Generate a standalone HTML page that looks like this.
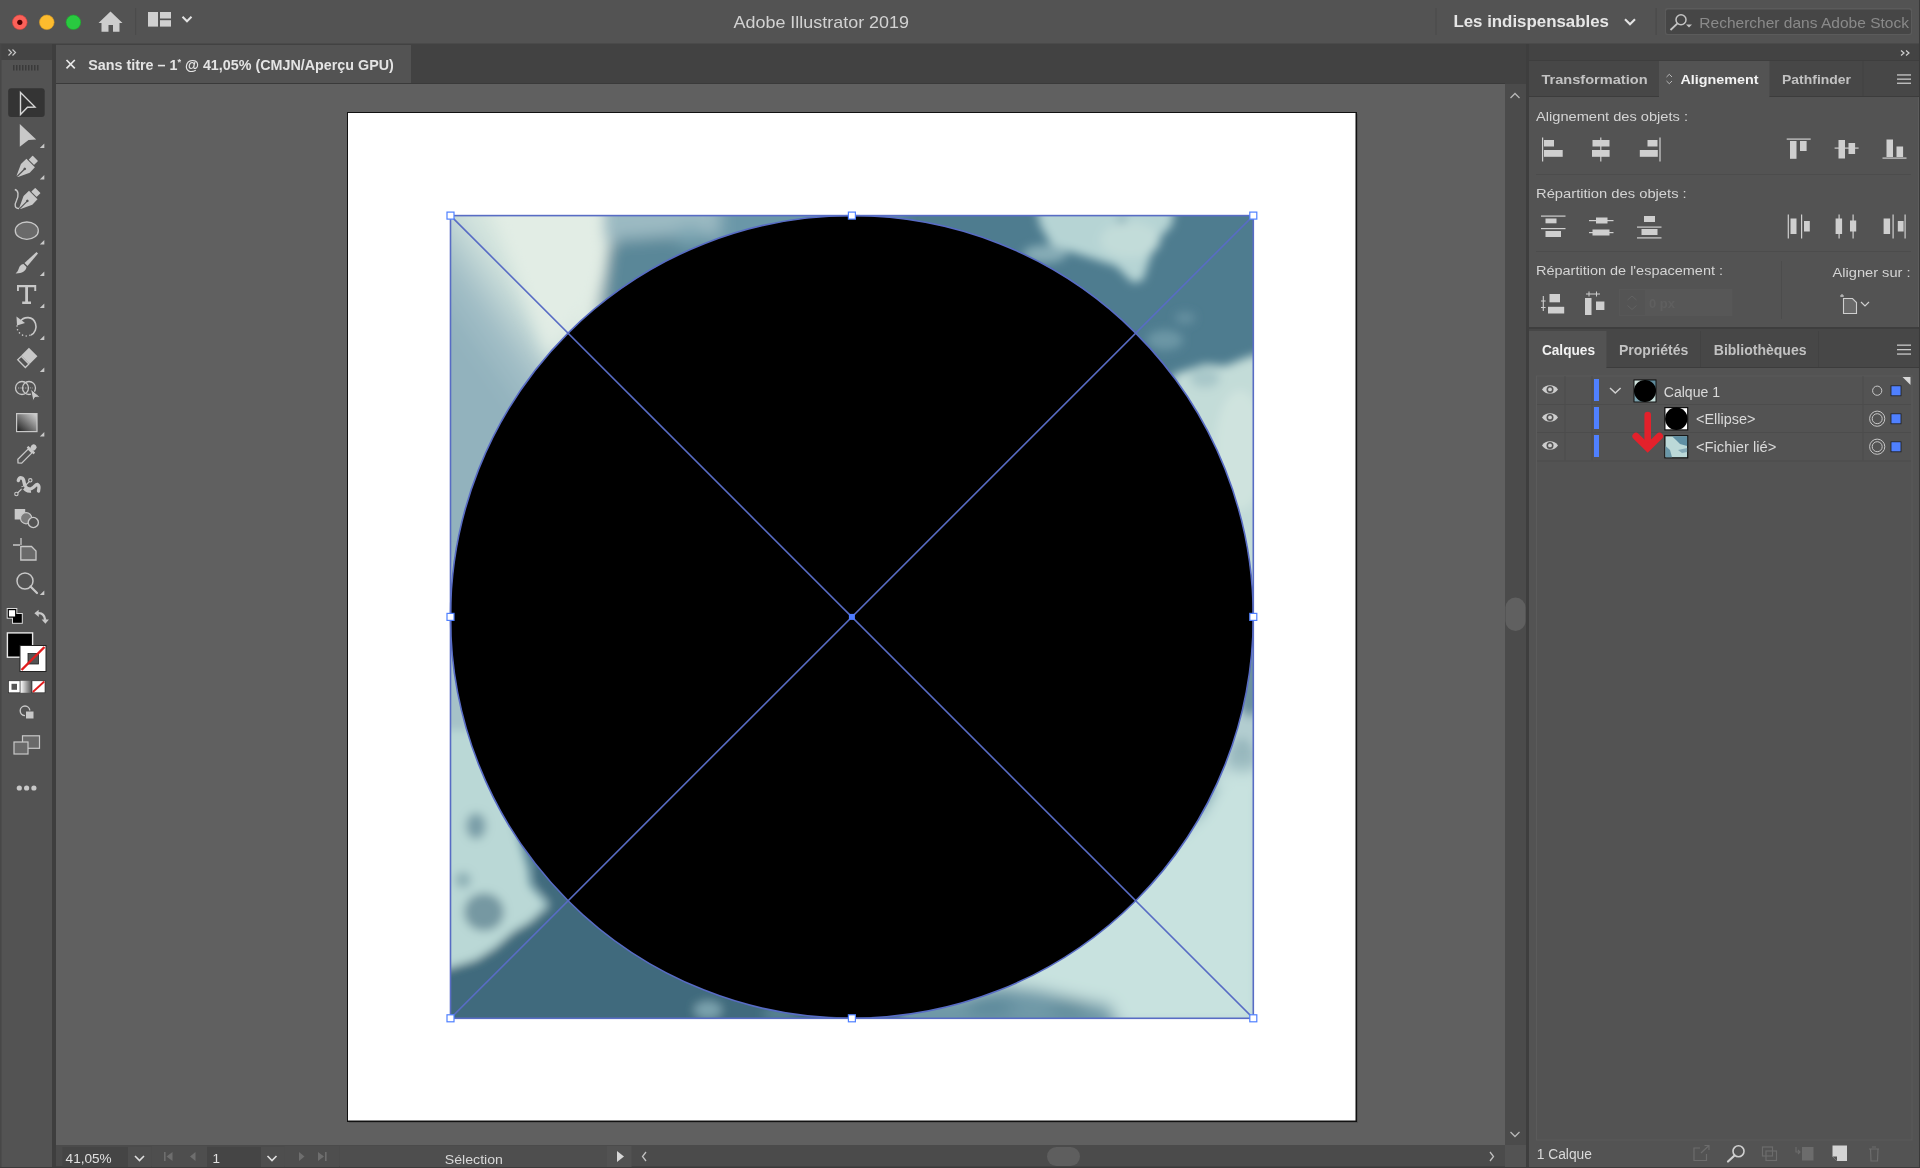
<!DOCTYPE html>
<html><head><meta charset="utf-8">
<style>
*{margin:0;padding:0;box-sizing:border-box}
html,body{width:1920px;height:1168px;overflow:hidden;background:#535353}
svg{position:absolute;left:0;top:0;display:block;will-change:transform}
text{font-family:"Liberation Sans",sans-serif;white-space:pre}
</style></head><body>
<svg width="1920" height="1168" viewBox="0 0 1920 1168">
<defs>
  <linearGradient id="tlgrad" gradientUnits="userSpaceOnUse" x1="452" y1="330" x2="548" y2="262"><stop offset="0" stop-color="#92b2bd"/><stop offset="0.3" stop-color="#a2bec6"/><stop offset="0.65" stop-color="#cfe1dc"/><stop offset="1" stop-color="#e1ece4"/></linearGradient>
  <filter id="bl4" x="-20%" y="-20%" width="140%" height="140%"><feGaussianBlur stdDeviation="4"/></filter>
  <filter id="bl5" x="-20%" y="-20%" width="140%" height="140%"><feGaussianBlur stdDeviation="5"/></filter>
  <filter id="bl6" x="-20%" y="-20%" width="140%" height="140%"><feGaussianBlur stdDeviation="8"/></filter>
  <clipPath id="circ"><circle cx="851.9" cy="616.9" r="401.4"/></clipPath>
  <clipPath id="imgclip"><rect x="450.5" y="215.6" width="802.8" height="802.7"/></clipPath>
</defs>

<!-- ===== TITLE BAR ===== -->
<rect x="0" y="0" width="1920" height="44" fill="#535353"/>
<rect x="0" y="43" width="1920" height="1" fill="#4a4a4a"/>
<!-- traffic lights -->
<circle cx="19.8" cy="22.3" r="7.3" fill="#fc6159" stroke="#e0443e" stroke-width="0.6"/>
<circle cx="19.8" cy="22.3" r="2.6" fill="#4d0000"/>
<circle cx="46.8" cy="22.3" r="7.3" fill="#fdbc2e" stroke="#de9f25" stroke-width="0.6"/>
<circle cx="73.4" cy="22.3" r="7.3" fill="#29c940" stroke="#1aab29" stroke-width="0.6"/>
<!-- home -->
<path d="M110.5 11.5 L122.5 23 L119.5 23 L119.5 31.8 L113 31.8 L113 25 L108.5 25 L108.5 31.8 L101.5 31.8 L101.5 23 L98.5 23 Z" fill="#cdcdcd"/>
<rect x="135" y="8" width="1.2" height="27" fill="#4b4b4b"/>
<!-- layout icon -->
<rect x="148" y="12" width="10" height="14.6" fill="#d0d0d0"/>
<rect x="160" y="12" width="11" height="6.5" fill="#d0d0d0"/>
<rect x="160" y="20.2" width="11" height="6.4" fill="#d0d0d0"/>
<path d="M182.5 16.8 L187 21.3 L191.5 16.8" stroke="#e4e4e4" stroke-width="2" fill="none"/>
<!-- title -->
<text x="733.5" y="28.1" font-size="17" fill="#d2d2d2" textLength="175.5" lengthAdjust="spacingAndGlyphs">Adobe Illustrator 2019</text>
<!-- workspace -->
<rect x="1435.4" y="8" width="1.2" height="27" fill="#4b4b4b"/>
<text x="1453.4" y="26.7" font-size="16.5" font-weight="bold" fill="#e6e6e6" textLength="155.6" lengthAdjust="spacingAndGlyphs">Les indispensables</text>
<path d="M1625 19.3 L1630 24.3 L1635 19.3" stroke="#e4e4e4" stroke-width="2.1" fill="none"/>
<rect x="1655.5" y="8" width="1.2" height="27" fill="#4b4b4b"/>
<!-- search -->
<rect x="1665" y="8" width="247" height="27" rx="2" fill="#5b5b5b"/>
<rect x="1666" y="9.5" width="245" height="24.5" rx="2" fill="#464646"/>
<circle cx="1681" cy="19.8" r="5" stroke="#c4c4c4" stroke-width="1.5" fill="none"/>
<path d="M1677.5 23.3 L1670.5 30" stroke="#c4c4c4" stroke-width="1.8"/>
<path d="M1686 24.5 L1692 24.5 L1689 27.5 Z" fill="#c4c4c4"/>
<text x="1699.3" y="27.7" font-size="14.5" fill="#8a8a8a" textLength="209.7" lengthAdjust="spacingAndGlyphs">Rechercher dans Adobe Stock</text>

<!-- ===== TAB STRIP ===== -->
<rect x="0" y="44" width="1920" height="40" fill="#424242"/>

<!-- ===== LEFT TOOLBAR ===== -->
<rect x="0" y="44" width="52" height="1124" fill="#535353"/>
<rect x="0" y="44" width="52" height="16" fill="#444444"/>
<rect x="52" y="44" width="4" height="1124" fill="#3e3e3e"/>
<rect x="0" y="44" width="1.5" height="1124" fill="#474747"/>
<path d="M8.5 49.5 L11.5 52.5 L8.5 55.5 M12.5 49.5 L15.5 52.5 L12.5 55.5" stroke="#c8c8c8" stroke-width="1.2" fill="none"/>
<g fill="#3a3a3a"><rect x="13" y="65" width="1.5" height="5.5"/><rect x="16" y="65" width="1.5" height="5.5"/><rect x="19" y="65" width="1.5" height="5.5"/><rect x="22" y="65" width="1.5" height="5.5"/><rect x="25" y="65" width="1.5" height="5.5"/><rect x="28" y="65" width="1.5" height="5.5"/><rect x="31" y="65" width="1.5" height="5.5"/><rect x="34" y="65" width="1.5" height="5.5"/><rect x="37" y="65" width="1.5" height="5.5"/></g>
<!-- selected tool bg -->
<rect x="8.2" y="88.2" width="36.5" height="28.8" rx="3" fill="#343434"/>
<g fill="#c8c8c8" stroke="none">
<!-- 1 selection outline -->
<path d="M20.5 92.5 L35 107 L27.5 107.3 L20.5 114.5 Z" fill="none" stroke="#d8d8d8" stroke-width="1.4" stroke-linejoin="miter"/>
<!-- 2 direct selection -->
<path d="M19.8 124 L36.2 139.5 L28.5 140 L19.8 146.7 Z"/>
<path d="M44.3 143.5 L44.3 148.0 L39.8 148.0 Z" fill="#c8c8c8"/>
<!-- 3 pen -->
<g transform="translate(26.4 167.2) rotate(45)">
  <rect x="-3.8" y="-12.6" width="7.6" height="5.6" rx="0.6"/>
  <path d="M-6 -6 L6 -6 L6.2 1.5 L1 12.8 L-1 12.8 L-6.2 1.5 Z"/>
  <path d="M0 2.5 L0 12.8" stroke="#535353" stroke-width="1.2"/>
  <circle cx="0" cy="2.3" r="1.3" fill="#535353"/>
</g>
<path d="M44.3 175 L44.3 179.5 L39.8 179.5 Z" fill="#c8c8c8"/>
<!-- 4 curvature -->
<g transform="translate(29 199.3) rotate(45)">
  <rect x="-3.8" y="-12.6" width="7.6" height="5.6" rx="0.6"/>
  <path d="M-6 -6 L6 -6 L6.2 1.5 L1 12.8 L-1 12.8 L-6.2 1.5 Z"/>
  <path d="M0 2.5 L0 12.8" stroke="#535353" stroke-width="1.2"/>
  <circle cx="0" cy="2.3" r="1.3" fill="#535353"/>
</g>
<path d="M14.8 189.5 C18.5 190.5 19 195 16.5 200.5 C14 205.5 15 208.5 19 208.5" stroke="#c8c8c8" stroke-width="1.4" fill="none"/>
<!-- 5 ellipse -->
<ellipse cx="26.8" cy="230.7" rx="11.5" ry="8.7" fill="#6a6a6a" stroke="#c8c8c8" stroke-width="1.3"/>
<path d="M44.3 240 L44.3 244.5 L39.8 244.5 Z" fill="#c8c8c8"/>
<!-- 6 paintbrush -->
<path d="M36.5 252 L38 253.5 L27.5 266 L24.5 263 Z"/>
<path d="M23.5 264 L26.5 267 C26 271 22 273.5 15.6 273.4 C18.5 271.5 18.5 268 20 266 C21 264.8 22.3 264 23.5 264 Z"/>
<path d="M44.3 271.5 L44.3 276.0 L39.8 276.0 Z" fill="#c8c8c8"/>
<!-- 7 type -->
<path d="M17 285 L36.2 285 L36.2 291 L34.3 291 L34.3 287.3 L28 287.3 L28 301.6 L31 301.6 L31 304 L22.2 304 L22.2 301.6 L25.2 301.6 L25.2 287.3 L18.9 287.3 L18.9 291 L17 291 Z"/>
<path d="M44.3 303.5 L44.3 308.0 L39.8 308.0 Z" fill="#c8c8c8"/>
<!-- 8 rotate -->
<path d="M20 321.5 C24 316 33 316 35.5 323.5 C37 328 35 333 31 335" stroke="#c8c8c8" stroke-width="1.6" fill="none"/>
<path d="M16.5 316.5 L17 325.5 L25 323 Z"/>
<g><circle cx="29.9423986675284" cy="335.3543713166886" r="0.8"/><circle cx="26.222604538137755" cy="335.9959492288943" r="0.8"/><circle cx="22.546605052802146" cy="335.13832555484396" r="0.8"/><circle cx="19.494759702358166" cy="332.91690021523596" r="0.8"/><circle cx="17.54888776364775" cy="329.6823874264811" r="0.8"/><circle cx="17.016199629949845" cy="325.945445637438" r="0.8"/></g>
<path d="M44.3 335.5 L44.3 340.0 L39.8 340.0 Z" fill="#c8c8c8"/>
<!-- 9 eraser -->
<g transform="translate(27.2 358) rotate(-45)">
  <rect x="-2.5" y="-6" width="11" height="12" />
  <rect x="-8" y="-5.4" width="5" height="10.8" fill="none" stroke="#c8c8c8" stroke-width="1.3"/>
</g>
<path d="M44.3 367.5 L44.3 372.0 L39.8 372.0 Z" fill="#c8c8c8"/>
<!-- 10 shape builder -->
<circle cx="22" cy="388" r="6.5" fill="none" stroke="#c8c8c8" stroke-width="1.3"/>
<circle cx="29" cy="388" r="6.5" fill="none" stroke="#c8c8c8" stroke-width="1.3"/>
<path d="M18 388 L33 388" stroke="#c8c8c8" stroke-width="0.8" stroke-dasharray="1.2 1.2"/>
<path d="M30.5 389 L40.3 397 L35 397.5 L33 401.3 Z" stroke="#535353" stroke-width="1"/>
<!-- 11 gradient -->
<defs><linearGradient id="gtool" x1="0" y1="1" x2="1" y2="0"><stop offset="0" stop-color="#1a1a1a"/><stop offset="1" stop-color="#d8d8d8"/></linearGradient></defs>
<rect x="16.6" y="413.6" width="20.4" height="18" fill="url(#gtool)" stroke="#c8c8c8" stroke-width="1.2"/>
<path d="M44.3 432 L44.3 436.5 L39.8 436.5 Z" fill="#c8c8c8"/>
<!-- 12 eyedropper -->
<g transform="translate(26.5 454.5) rotate(45)">
  <rect x="-2.8" y="-13" width="5.6" height="6" rx="2.5"/>
  <rect x="-4.8" y="-7.5" width="9.6" height="2.5" rx="0.5"/>
  <path d="M-2.7 -5 L2.7 -5 L2.7 9.5 L0 12 L-2.7 9.5 Z" fill="none" stroke="#c8c8c8" stroke-width="1.3"/>
</g>
<!-- 13 blend -->
<path d="M18.3 480.5 C19.5 476.5 23.5 477 24 482 C24.5 487.5 27.5 490 31.5 488.5 C35 487 35.5 484 37.5 484.5 C39.5 485.5 39 489 38.5 491" stroke="#c8c8c8" stroke-width="3.4" fill="none" stroke-linecap="round"/>
<path d="M22.5 486 C23.5 489.5 27 492 31 491.5" stroke="#c8c8c8" stroke-width="2.5" fill="none"/>
<path d="M17 493.5 L30.5 480.5" stroke="#c8c8c8" stroke-width="1.1"/>
<ellipse cx="22.8" cy="488" rx="1.8" ry="1.2" fill="#535353" transform="rotate(-40 22.8 488)"/>
<circle cx="16.4" cy="494" r="1.7" fill="#535353" stroke="#c8c8c8" stroke-width="1.1"/>
<circle cx="30.3" cy="480.3" r="1.7" fill="#535353" stroke="#c8c8c8" stroke-width="1.1"/>
<!-- 14 symbol sprayer -->
<rect x="14.7" y="509" width="10.5" height="10.5"/>
<circle cx="26.1" cy="518.2" r="5.6" fill="#7a7a7a" stroke="#c8c8c8" stroke-width="1.2"/>
<circle cx="33.3" cy="522.5" r="5.1" fill="#535353" stroke="#c8c8c8" stroke-width="1.4"/>
<!-- 15 artboard -->
<path d="M21 538 L21 545 M13 545 L20 545" stroke="#c8c8c8" stroke-width="1.3"/>
<path d="M20.8 546.5 L31.5 546.5 L36 551 L36 560 L20.8 560 Z" fill="#6a6a6a" stroke="#c8c8c8" stroke-width="1.3"/>
<!-- 16 zoom -->
<circle cx="25" cy="581" r="8" fill="none" stroke="#c8c8c8" stroke-width="1.5"/>
<path d="M30.5 586.5 L37 593" stroke="#c8c8c8" stroke-width="2.2" stroke-linecap="round"/>
<path d="M44.3 590.5 L44.3 595.0 L39.8 595.0 Z" fill="#c8c8c8"/>
<!-- 17 default fill stroke & swap -->
<rect x="6.7" y="608" width="10.6" height="10.7" fill="#d8d8d8"/>
<rect x="12" y="613" width="10.8" height="10.8" fill="#d8d8d8"/>
<rect x="13" y="614" width="8.8" height="8.8" fill="#000"/>
<rect x="7.7" y="609" width="8.6" height="8.7" fill="#000"/>
<rect x="8.9" y="610.2" width="6.2" height="6.3" fill="#fff"/>
<path d="M37.5 613.3 C41.5 612.8 44.5 614.8 45.2 620" stroke="#c8c8c8" stroke-width="2.3" fill="none"/>
<path d="M34.4 613.2 L38.6 609.8 L38.8 617 Z" fill="#c8c8c8"/>
<path d="M41.6 619.6 L48.9 619.6 L45.4 623.8 Z" fill="#c8c8c8"/>
<!-- 18 fill stroke big -->
<rect x="7.4" y="632.9" width="25.2" height="24.3" fill="#000" stroke="#e8e8e8" stroke-width="1.4"/>
<rect x="20" y="645.5" width="26" height="26" fill="#fff" stroke="#222" stroke-width="1"/>
<rect x="28" y="653.5" width="10.5" height="10.5" fill="#535353" stroke="#222" stroke-width="0.8"/>
<path d="M21.5 670 L44.5 647" stroke="#e11d1d" stroke-width="2.4"/>
<!-- 19 mode buttons -->
<rect x="8.5" y="680.8" width="11.5" height="12" fill="#fff" stroke="#222" stroke-width="0.6"/>
<rect x="11.5" y="683.8" width="5.5" height="6" fill="#555"/>
<defs><linearGradient id="gmode" x1="0" x2="1"><stop offset="0" stop-color="#fff"/><stop offset="1" stop-color="#555"/></linearGradient></defs>
<rect x="20.5" y="680.8" width="11" height="12" fill="url(#gmode)"/>
<rect x="32" y="680.8" width="13" height="12" fill="#fff" stroke="#222" stroke-width="0.6"/>
<path d="M32.8 692 L44.3 681.5" stroke="#e11d1d" stroke-width="1.8"/>
<!-- 20 draw mode -->
<circle cx="25" cy="710.8" r="4.8" fill="none" stroke="#c8c8c8" stroke-width="1.4"/>
<rect x="25.5" y="711" width="8.5" height="8" stroke="#535353" stroke-width="1"/>
<!-- 21 screen mode -->
<rect x="22.5" y="735.8" width="17" height="12.5" fill="#6a6a6a" stroke="#c8c8c8" stroke-width="1.2"/>
<rect x="14" y="742" width="14" height="12" fill="#6a6a6a" stroke="#c8c8c8" stroke-width="1.2"/>
<!-- 22 dots -->
<circle cx="19.3" cy="788" r="2.6"/><circle cx="26.6" cy="788" r="2.6"/><circle cx="33.9" cy="788" r="2.6"/>
</g>

<!-- ===== CANVAS ===== -->
<rect x="56" y="84" width="1449" height="1061" fill="#606060"/>
<!-- active doc tab -->
<rect x="56" y="45" width="355" height="38" fill="#535353"/>
<rect x="56" y="83" width="1449" height="1" fill="#3a3a3a"/>
<path d="M66.5 60 L74.8 68.3 M74.8 60 L66.5 68.3" stroke="#e8e8e8" stroke-width="1.7"/>
<text x="88.3" y="69.5" font-size="14" font-weight="bold" fill="#e4e4e4" textLength="305.5" lengthAdjust="spacingAndGlyphs">Sans titre – 1<tspan font-size="9" dy="-5">*</tspan><tspan dy="5"> @ 41,05% (CMJN/Aperçu GPU)</tspan></text>

<!-- artboard -->
<rect x="347" y="112" width="1010" height="1010" fill="#111"/>
<rect x="349" y="1122" width="1009" height="1" fill="#535353"/>
<rect x="1357" y="114" width="1" height="1009" fill="#535353"/>
<rect x="348" y="113" width="1007.5" height="1007.5" fill="#ffffff"/>

<!-- image -->
<g clip-path="url(#imgclip)">
  <rect x="450" y="215" width="804" height="804" fill="#4e7c8f"/>
  <g filter="url(#bl6)">
    <!-- TL left column -->
    <path d="M430 200 L620 200 L600 330 L560 460 L500 720 L430 720 Z" fill="url(#tlgrad)"/>
    <!-- TL dark top -->
    <path d="M640 200 L900 200 L900 320 L640 320 Z" fill="#6b97a8"/>
    <path d="M600 200 L720 200 L720 236 L600 240 Z" fill="#9bbac2"/>
    <path d="M608 246 C625 236 660 238 705 232 L720 300 L596 330 Z" fill="#5a8798"/>
    <ellipse cx="690" cy="236" rx="14" ry="10" fill="#7ba5b2"/>
  </g>
  <g filter="url(#bl6)">
    <path d="M490 200 L600 200 L598 270 L572 325 L548 360 Z" fill="#e2ede5"/>
  </g>
<g filter="url(#bl5)">
    <!-- TR cloud 1 -->
    <path d="M1036 205 L1175 205 L1172 225 L1158 240 L1150 258 L1143 280 L1133 283 L1116 266 L1085 256 L1052 246 L1040 225 Z" fill="#b6d4d4"/>
    <ellipse cx="1122" cy="222" rx="5" ry="7" fill="#86acb6"/>
    <ellipse cx="1045" cy="254" rx="22" ry="9" fill="#86acb6"/>
    <ellipse cx="1130" cy="240" rx="30" ry="18" fill="#c2dcd9"/>
    <ellipse cx="1165" cy="340" rx="18" ry="10" fill="#6c96a5"/>
    <ellipse cx="1185" cy="318" rx="10" ry="6" fill="#6690a0"/>
    <!-- TR cloud 2 -->
    <path d="M1172 375 L1205 364 L1225 366 L1245 358 L1265 352 L1265 610 L1220 610 L1200 520 L1180 420 Z" fill="#c3dcd8"/>
    <ellipse cx="1205" cy="378" rx="15" ry="10" fill="#a8c7c9"/>
    <ellipse cx="1240" cy="450" rx="25" ry="60" fill="#cfe3de"/>
    <!-- right middle -->
    <path d="M1215 600 L1265 600 L1265 790 L1215 790 Z" fill="#b2cdd0"/>
    <ellipse cx="1250" cy="685" rx="14" ry="32" fill="#6c91a0"/>
    <ellipse cx="1242" cy="760" rx="12" ry="22" fill="#98b8be"/>
  </g>
  <g filter="url(#bl6)">
    <!-- BR pale -->
    <path d="M1265 770 L1265 1030 L880 1030 L950 985 L1100 900 L1200 810 L1222 770 Z" fill="#c8e2df"/>
    <!-- BR bottom dark patches -->
    <path d="M880 995 L920 990 L960 995 L1000 985 L1040 990 L1080 1000 L1110 1005 L1120 1030 L880 1030 Z" fill="#6f99a7"/>
    <ellipse cx="990" cy="1008" rx="25" ry="9" fill="#5c889a"/>
    <ellipse cx="1070" cy="1008" rx="20" ry="9" fill="#5f8a9a"/>
    <!-- left middle -->
    <path d="M430 560 L482 560 L482 720 L430 720 Z" fill="#a3bec6"/>
  </g>
  <g filter="url(#bl5)">
    <!-- BL cloud -->
    <path d="M430 690 L475 700 L500 770 L520 840 L528 868 L530 885 L548 905 L530 922 L513 932 L495 948 L476 960 L450 968 L430 972 Z" fill="#bad8d6"/>
    <path d="M430 600 L472 600 L478 730 L430 730 Z" fill="#a6c2c8"/>
    <ellipse cx="476" cy="826" rx="10" ry="13" fill="#7a9ea8"/>
    <ellipse cx="484" cy="912" rx="20" ry="19" fill="#7698a2"/>
    <ellipse cx="463" cy="880" rx="8" ry="8" fill="#8eb0b6"/>
    <!-- BL dark -->
    <path d="M430 972 L450 968 L476 960 L495 948 L513 932 L530 922 L552 905 L536 885 L533 868 L545 860 L640 900 L900 1000 L900 1030 L430 1030 Z" fill="#3f6b7d"/>
    <ellipse cx="708" cy="1010" rx="14" ry="9" fill="#7aa2ae"/>
    <ellipse cx="780" cy="1014" rx="18" ry="6" fill="#5a8494"/>
  </g>
</g>
<!-- ellipse -->
<circle cx="851.9" cy="616.9" r="401.4" fill="#000"/>
<!-- selection -->
<g stroke="#586cc4" stroke-width="1.6" fill="none">
  <rect x="450.5" y="215.6" width="802.8" height="802.7"/>
  <line x1="450.5" y1="215.6" x2="1253.3" y2="1018.3"/>
  <line x1="1253.3" y1="215.6" x2="450.5" y2="1018.3"/>
  <circle cx="851.9" cy="616.9" r="401.4"/>
</g>
<rect x="447.0" y="212.1" width="7" height="7" fill="#fff" stroke="#4f80ff" stroke-width="1.2"/><rect x="848.4" y="212.1" width="7" height="7" fill="#fff" stroke="#4f80ff" stroke-width="1.2"/><rect x="1249.8" y="212.1" width="7" height="7" fill="#fff" stroke="#4f80ff" stroke-width="1.2"/><rect x="447.0" y="613.4" width="7" height="7" fill="#fff" stroke="#4f80ff" stroke-width="1.2"/><rect x="1249.8" y="613.4" width="7" height="7" fill="#fff" stroke="#4f80ff" stroke-width="1.2"/><rect x="447.0" y="1014.8" width="7" height="7" fill="#fff" stroke="#4f80ff" stroke-width="1.2"/><rect x="848.4" y="1014.8" width="7" height="7" fill="#fff" stroke="#4f80ff" stroke-width="1.2"/><rect x="1249.8" y="1014.8" width="7" height="7" fill="#fff" stroke="#4f80ff" stroke-width="1.2"/>
<rect x="848.9" y="613.9" width="6" height="6" fill="#4f7cff"/>

<!-- ===== RIGHT SCROLLBAR ===== -->
<rect x="1505" y="84" width="21" height="1061" fill="#4b4b4b"/>
<path d="M1510.5 98 L1515 93.5 L1519.5 98" stroke="#b8b8b8" stroke-width="1.3" fill="none"/>
<path d="M1510.5 1132 L1515 1136.5 L1519.5 1132" stroke="#b8b8b8" stroke-width="1.3" fill="none"/>
<rect x="1505.5" y="597.5" width="20" height="33.5" rx="10" fill="#606060"/>
<rect x="1526" y="44" width="3" height="1124" fill="#3e3e3e"/>

<!-- ===== STATUS BAR ===== -->
<rect x="56" y="1145" width="1470" height="23" fill="#4b4b4b"/>
<rect x="56" y="1166.5" width="1470" height="1.5" fill="#3a3a3a"/>
<rect x="62.5" y="1147" width="65.5" height="20" fill="#454545"/>
<rect x="128" y="1147" width="23.5" height="20" fill="#4e4e4e"/>
<rect x="152" y="1146" width="55" height="21" fill="#4e4e4e"/>
<rect x="207" y="1147" width="54" height="20" fill="#454545"/>
<rect x="261" y="1147" width="23.4" height="20" fill="#4e4e4e"/>
<rect x="284.4" y="1146" width="55" height="21" fill="#4e4e4e"/>
<rect x="340" y="1146" width="267" height="21" fill="#4e4e4e"/>
<rect x="607" y="1146" width="24.6" height="21" fill="#525252"/>
<text x="65.6" y="1163" font-size="13.5" fill="#e0e0e0" textLength="46.1" lengthAdjust="spacingAndGlyphs">41,05%</text>
<text x="212.5" y="1163" font-size="13.5" fill="#e0e0e0">1</text>
<path d="M135 1156 L139.5 1160.5 L144 1156" stroke="#e0e0e0" stroke-width="1.6" fill="none"/>
<path d="M267.5 1156 L272 1160.5 L276.5 1156" stroke="#e0e0e0" stroke-width="1.6" fill="none"/>
<g fill="#6e6e6e">
<rect x="164" y="1152" width="1.6" height="9"/><path d="M172.5 1152 L172.5 1161 L166.5 1156.5 Z"/>
<path d="M195.5 1152 L195.5 1161 L190 1156.5 Z"/>
<path d="M299 1152 L299 1161 L304.5 1156.5 Z"/>
<path d="M318 1152 L318 1161 L324 1156.5 Z"/><rect x="325" y="1152" width="1.6" height="9"/>
</g>
<text x="444.8" y="1163.75" font-size="13.5" fill="#d8d8d8" textLength="58.2" lengthAdjust="spacingAndGlyphs">Sélection</text>
<path d="M617 1151 L617 1162 L624 1156.5 Z" fill="#d8d8d8"/>
<path d="M646 1152 L642.5 1156.5 L646 1161" stroke="#c0c0c0" stroke-width="1.3" fill="none"/>
<path d="M1490 1152 L1493.5 1156.5 L1490 1161" stroke="#c0c0c0" stroke-width="1.3" fill="none"/>
<rect x="1047" y="1147" width="33" height="19" rx="9.5" fill="#5e5e5e"/>
<rect x="1505" y="1145" width="21" height="22" fill="#535353"/>

<!-- ===== RIGHT PANEL ===== -->
<rect x="1529" y="44" width="391" height="1124" fill="#535353"/>
<rect x="1529" y="44" width="391" height="16" fill="#434343"/>
<path d="M1901 50.5 L1904 53 L1901 55.5 M1906 50.5 L1909 53 L1906 55.5" stroke="#d0d0d0" stroke-width="1.2" fill="none"/>
<!-- align panel tabs -->
<rect x="1529" y="60" width="391" height="37" fill="#474747"/>
<rect x="1529" y="60" width="391" height="1" fill="#3e3e3e"/>
<rect x="1659" y="61" width="110.5" height="37" fill="#535353"/>
<rect x="1862.5" y="61" width="1" height="36" fill="#424242"/>
<rect x="1529" y="96" width="130" height="1" fill="#3c3c3c"/>
<rect x="1769.5" y="96" width="150.5" height="1" fill="#3c3c3c"/>
<text x="1541.4" y="83.75" font-size="13.5" font-weight="bold" fill="#c2c2c2" textLength="106.2" lengthAdjust="spacingAndGlyphs">Transformation</text>
<path d="M1666.5 77 L1669.3 74.3 L1672 77 M1666.5 81 L1669.3 83.7 L1672 81" stroke="#b8b8b8" stroke-width="1" fill="none"/>
<text x="1680.4" y="83.75" font-size="13.5" font-weight="bold" fill="#f2f2f2" textLength="78.1" lengthAdjust="spacingAndGlyphs">Alignement</text>
<text x="1782" y="83.75" font-size="13.5" font-weight="bold" fill="#c2c2c2" textLength="69" lengthAdjust="spacingAndGlyphs">Pathfinder</text>
<g fill="#c8c8c8"><rect x="1897" y="74.3" width="14" height="1.3"/><rect x="1897" y="78.5" width="14" height="1.3"/><rect x="1897" y="82.6" width="14" height="1.3"/></g>
<!-- align panel body -->
<rect x="1918" y="97" width="2" height="231" fill="#5c5c5c"/>
<g font-size="13" fill="#d4d4d4">
<text x="1536" y="120.7" textLength="152" lengthAdjust="spacingAndGlyphs">Alignement des objets :</text>
<text x="1536" y="198.3" textLength="150.7" lengthAdjust="spacingAndGlyphs">Répartition des objets :</text>
<text x="1536" y="275.4" textLength="187" lengthAdjust="spacingAndGlyphs">Répartition de l'espacement :</text>
<text x="1832.5" y="276.5" textLength="78.1" lengthAdjust="spacingAndGlyphs">Aligner sur :</text>
</g>
<rect x="1536" y="174" width="375" height="1" fill="#4c4c4c"/>
<rect x="1536" y="251" width="375" height="1" fill="#4c4c4c"/>
<rect x="1781" y="261" width="1" height="58" fill="#4c4c4c"/>
<g fill="#cfcfcf">
<!-- align left -->
<rect x="1542" y="137.5" width="1.2" height="24"/><rect x="1544" y="140" width="10" height="6.5"/><rect x="1544" y="150" width="18.7" height="6.8"/>
<!-- align h center -->
<rect x="1600.2" y="137.5" width="1.2" height="24"/><rect x="1592.5" y="140" width="17" height="6.5"/><rect x="1592" y="150" width="17.6" height="6.8"/>
<!-- align right -->
<rect x="1659.4" y="137.5" width="1.2" height="24"/><rect x="1647.5" y="140" width="10" height="6.5"/><rect x="1639.8" y="150" width="18" height="6.8"/>
<!-- align top -->
<rect x="1786.7" y="138.5" width="24" height="1.2"/><rect x="1790" y="141" width="6.5" height="17.8"/><rect x="1800" y="141" width="6.6" height="10"/>
<!-- align v center -->
<rect x="1834.6" y="147.5" width="24" height="1.2"/><rect x="1838.5" y="140" width="6.5" height="18.5"/><rect x="1848.5" y="143" width="6.6" height="11"/>
<!-- align bottom -->
<rect x="1882.5" y="157.5" width="24" height="1.2"/><rect x="1886.5" y="139.5" width="6.5" height="17.5"/><rect x="1896.5" y="146.5" width="6.6" height="10.5"/>
<!-- distribute top -->
<rect x="1541" y="215.5" width="24.5" height="1.2"/><rect x="1545.5" y="218.5" width="11" height="4.8"/><rect x="1541" y="228" width="24.5" height="1.2"/><rect x="1545.5" y="231" width="15.5" height="6"/>
<!-- distribute v center -->
<rect x="1589" y="220" width="24.5" height="1.2"/><rect x="1596" y="217.5" width="11.5" height="6"/><rect x="1589" y="232" width="24.5" height="1.2"/><rect x="1592.5" y="229.5" width="17" height="6"/>
<!-- distribute bottom -->
<rect x="1637" y="226.5" width="24.5" height="1.2"/><rect x="1644" y="216" width="11" height="6"/><rect x="1637" y="237.3" width="24.5" height="1.2"/><rect x="1641.5" y="229" width="16" height="6"/>
<!-- distribute left -->
<rect x="1787.7" y="214.5" width="1.2" height="24"/><rect x="1790.5" y="218.5" width="6" height="15.5"/><rect x="1801" y="214.5" width="1.2" height="24"/><rect x="1804" y="221" width="5.8" height="10.5"/>
<!-- distribute h center -->
<rect x="1838.5" y="214.5" width="1.2" height="24"/><rect x="1835.6" y="218.5" width="6.5" height="15.5"/><rect x="1852.5" y="214.5" width="1.2" height="24"/><rect x="1850" y="220.5" width="6.2" height="11"/>
<!-- distribute right -->
<rect x="1892.5" y="214.5" width="1.2" height="24"/><rect x="1883.6" y="218.5" width="6.5" height="15.5"/><rect x="1904.5" y="214.5" width="1.2" height="24"/><rect x="1897.8" y="221" width="5.8" height="10.5"/>
<!-- spacing v -->
<rect x="1549.5" y="294" width="10.5" height="8.3"/><rect x="1548" y="306.8" width="16.2" height="6.7"/>
<path d="M1543.3 296 L1543.3 311 M1541 301 L1545.6 301 M1541 307.5 L1545.6 307.5" stroke="#cfcfcf" stroke-width="1.1" fill="none"/>
<!-- spacing h -->
<rect x="1585" y="298" width="6.5" height="17"/><rect x="1596" y="301.5" width="8.4" height="8.5"/>
<path d="M1586 294 L1600 294 M1589 291.5 L1589 296.5 M1596.5 291.5 L1596.5 296.5" stroke="#cfcfcf" stroke-width="1" fill="none"/>
</g>
<!-- disabled input -->
<rect x="1619" y="289" width="113.5" height="27" fill="#575757"/>
<rect x="1620" y="290" width="25" height="25" fill="#545454"/>
<path d="M1627.5 300 L1632 296 L1636.5 300 M1627.5 305.5 L1632 309.5 L1636.5 305.5" stroke="#626262" stroke-width="1" fill="none"/>
<text x="1649" y="307.5" font-size="13" font-weight="bold" fill="#5f5f5f">0 px</text>
<!-- align to -->
<path d="M1843.5 298.5 L1852.5 298.5 L1856.5 302.5 L1856.5 313.5 L1843.5 313.5 Z" fill="#6a6a6a" stroke="#cfcfcf" stroke-width="1.1"/>
<path d="M1840 296 L1844 296 M1842 294 L1842 297" stroke="#cfcfcf" stroke-width="1"/>
<path d="M1861 302 L1865 306 L1869 302" stroke="#cfcfcf" stroke-width="1.2" fill="none"/>
<rect x="1529" y="327" width="391" height="2" fill="#3e3e3e"/>
<!-- layers panel tabs -->
<rect x="1529" y="329" width="391" height="39" fill="#474747"/>
<rect x="1529" y="331" width="77.5" height="37" fill="#535353"/>
<rect x="1700" y="331" width="1" height="37" fill="#424242"/>
<rect x="1818" y="331" width="1" height="37" fill="#424242"/>
<rect x="1606.5" y="367" width="313.5" height="1" fill="#3c3c3c"/>
<text x="1541.9" y="355.4" font-size="14" font-weight="bold" fill="#f2f2f2" textLength="53.1" lengthAdjust="spacingAndGlyphs">Calques</text>
<text x="1619" y="355.4" font-size="14" font-weight="bold" fill="#c2c2c2" textLength="69.3" lengthAdjust="spacingAndGlyphs">Propriétés</text>
<text x="1713.75" y="355.4" font-size="14" font-weight="bold" fill="#c2c2c2" textLength="92.75" lengthAdjust="spacingAndGlyphs">Bibliothèques</text>
<g fill="#c8c8c8"><rect x="1897" y="344.5" width="14" height="1.3"/><rect x="1897" y="349" width="14" height="1.3"/><rect x="1897" y="353.4" width="14" height="1.3"/></g>
<!-- layers list -->
<rect x="1536.5" y="376" width="375.5" height="764" fill="#535353" stroke="#5b5b5b" stroke-width="1"/>
<g fill="#4c4c4c">
<rect x="1537" y="404" width="374" height="1"/><rect x="1537" y="432" width="374" height="1"/><rect x="1537" y="460.5" width="374" height="1"/>
<rect x="1564.5" y="376" width="1" height="84.5"/><rect x="1591.5" y="376" width="1" height="84.5"/><rect x="1862.5" y="376" width="1" height="84.5"/>
</g>
<!-- eyes -->
<path d="M1542 389.4 C1545.5 383.79999999999995 1554.5 383.79999999999995 1558 389.4 C1554.5 395.0 1545.5 395.0 1542 389.4 Z" fill="#cdcdcd"/><circle cx="1550" cy="389.4" r="3.5" fill="#535353"/><circle cx="1550" cy="389.4" r="1.9" fill="#cdcdcd"/><path d="M1542 417.4 C1545.5 411.79999999999995 1554.5 411.79999999999995 1558 417.4 C1554.5 423.0 1545.5 423.0 1542 417.4 Z" fill="#cdcdcd"/><circle cx="1550" cy="417.4" r="3.5" fill="#535353"/><circle cx="1550" cy="417.4" r="1.9" fill="#cdcdcd"/><path d="M1542 445.4 C1545.5 439.79999999999995 1554.5 439.79999999999995 1558 445.4 C1554.5 451.0 1545.5 451.0 1542 445.4 Z" fill="#cdcdcd"/><circle cx="1550" cy="445.4" r="3.5" fill="#535353"/><circle cx="1550" cy="445.4" r="1.9" fill="#cdcdcd"/>
<!-- blue bars -->
<g fill="#4f80ff"><rect x="1594" y="379" width="5" height="22"/><rect x="1594" y="407" width="5" height="22"/><rect x="1594" y="435" width="5" height="22"/></g>
<path d="M1610 388 L1615.3 393 L1620.6 388" stroke="#d0d0d0" stroke-width="1.5" fill="none"/>
<!-- thumbs -->
<rect x="1633.5" y="379.4" width="23" height="23" fill="#111"/>
<path d="M1634.5 380.4 L1645 380.4 L1634.5 391 Z" fill="#d0e3de"/>
<path d="M1645 380.4 L1655.5 380.4 L1655.5 391 Z" fill="#5f8b9c"/>
<path d="M1634.5 391 L1634.5 401.4 L1645 401.4 Z" fill="#7aa2ae"/>
<path d="M1655.5 391 L1655.5 401.4 L1645 401.4 Z" fill="#c6e0dd"/>
<circle cx="1645" cy="390.9" r="11" fill="#000"/>
<rect x="1664.3" y="407" width="24" height="23.5" fill="#111"/>
<rect x="1665.5" y="408.2" width="21.6" height="21.1" fill="#fff"/>
<circle cx="1676.3" cy="418.75" r="11.2" fill="#000"/>
<defs><linearGradient id="gthumb" x1="0" y1="0" x2="1" y2="1"><stop offset="0" stop-color="#5e8ea0"/><stop offset="0.45" stop-color="#b8d6d6"/><stop offset="0.7" stop-color="#6f9aaa"/><stop offset="1" stop-color="#bcd8d6"/></linearGradient></defs>
<rect x="1664.3" y="435.1" width="24" height="23.3" fill="#111"/>
<rect x="1665.5" y="436.3" width="21.6" height="20.9" fill="#bcd9d8"/>
<path d="M1672 436.3 L1687.1 436.3 L1687.1 446 L1680 444 L1676 440 Z" fill="#5f8fa3"/>
<path d="M1665.5 446 L1670 450 L1672 457.2 L1665.5 457.2 Z" fill="#6a97a8"/>
<path d="M1678 450 L1687.1 448 L1687.1 452 L1682 453 Z" fill="#86abb8"/>
<g font-size="14" fill="#dadada">
<text x="1663.75" y="397" textLength="56.25" lengthAdjust="spacingAndGlyphs">Calque 1</text>
<text x="1696" y="424" textLength="59.4" lengthAdjust="spacingAndGlyphs">&lt;Ellipse&gt;</text>
<text x="1696" y="452.3" textLength="80.25" lengthAdjust="spacingAndGlyphs">&lt;Fichier lié&gt;</text>
</g>
<!-- target circles -->
<g stroke="#c8c8c8" stroke-width="1" fill="none">
<circle cx="1877.2" cy="390.7" r="4.6"/>
<circle cx="1877.2" cy="418.7" r="7.6"/><circle cx="1877.2" cy="418.7" r="5"/>
<circle cx="1877.2" cy="446.7" r="7.6"/><circle cx="1877.2" cy="446.7" r="5"/>
</g>
<g fill="#4f80ff" stroke="#1e1e1e" stroke-width="0.8">
<rect x="1891" y="385.8" width="10" height="10"/><rect x="1891" y="413.8" width="10" height="10"/><rect x="1891" y="441.8" width="10" height="10"/>
</g>
<path d="M1902.5 377 L1910.5 377 L1910.5 385 Z" fill="#d8d8d8"/>
<!-- red arrow -->
<path d="M1647.7 415 L1647.7 446" stroke="#e3212b" stroke-width="6.6" stroke-linecap="round"/>
<path d="M1636 436.2 L1647.7 447.8 L1659.4 436.2" stroke="#e3212b" stroke-width="7.2" fill="none" stroke-linecap="round" stroke-linejoin="miter"/>
<!-- layers footer -->
<text x="1536.7" y="1159" font-size="14" fill="#dadada" textLength="55.2" lengthAdjust="spacingAndGlyphs">1 Calque</text>
<g stroke="#6c6c6c" stroke-width="1.2" fill="none">
<path d="M1700 1148 L1694 1148 L1694 1160.5 L1706.5 1160.5 L1706.5 1154 M1701 1153 L1709 1145.5 M1704.5 1145.5 L1709 1145.5 L1709 1150"/>
<rect x="1762.5" y="1147" width="10" height="9"/><rect x="1766" y="1151" width="10.5" height="9.5"/>
<path d="M1869 1149 L1879 1149 M1872 1147 L1876 1147 M1870.5 1149 L1871 1161 L1877.5 1161 L1878 1149"/>
</g>
<path d="M1796 1147 L1796 1152 L1800 1152 M1798 1150 L1800 1152 L1798 1154" stroke="#6c6c6c" stroke-width="1.1" fill="none"/>
<rect x="1802" y="1147" width="11.5" height="13.5" fill="#6c6c6c"/>
<circle cx="1738.5" cy="1151.3" r="5.5" stroke="#d0d0d0" stroke-width="1.6" fill="none"/>
<path d="M1734.5 1155.5 L1728 1161.5" stroke="#d0d0d0" stroke-width="2.2" stroke-linecap="round"/>
<path d="M1832.5 1145.5 L1847 1145.5 L1847 1161 L1837 1161 L1832.5 1156.5 Z" fill="#d4d4d4"/>
<path d="M1832.5 1156.5 L1837 1156.5 L1837 1161" fill="#535353"/>

<rect x="1919" y="0" width="1" height="1168" fill="#3a3a3a"/>
<rect x="0" y="1167" width="1920" height="1" fill="#3a3a3a"/>
</svg>
</body></html>
